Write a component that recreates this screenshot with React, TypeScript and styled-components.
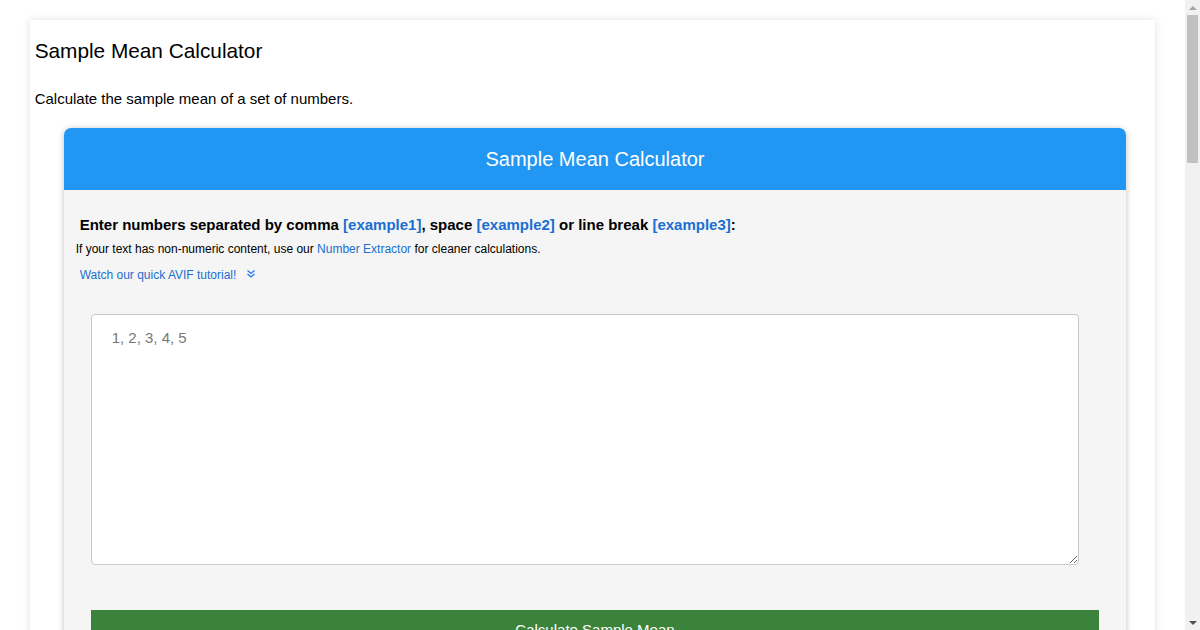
import React from "react";
import styled, { createGlobalStyle } from "styled-components";

const GlobalStyle = createGlobalStyle`
  html, body {
    margin: 0;
    padding: 0;
    background: #ffffff;
    font-family: "Liberation Sans", Arial, sans-serif;
    color: #000;
    overflow: hidden;
  }
`;

const ChevronsDown = () => (
  <svg width="10" height="10" viewBox="0 0 10 10" fill="none" stroke="#1a73e8" strokeWidth="1.2">
    <path d="M1.5 1.5 L5 4.5 L8.5 1.5" />
    <path d="M1.5 5 L5 8 L8.5 5" />
  </svg>
);

const App = () => {
  return (
    <>
      <GlobalStyle />
      <Viewport>
        <Main>
          <Page>
            <PageTitle>Sample Mean Calculator</PageTitle>
            <Intro>Calculate the sample mean of a set of numbers.</Intro>
            <Calculator>
              <CalcHeader>Sample Mean Calculator</CalcHeader>
              <CalcBody>
                <Prompt>
                  Enter numbers separated by comma <Link href="#">[example1]</Link>, space{" "}
                  <Link href="#">[example2]</Link> or line break <Link href="#">[example3]</Link>:
                </Prompt>
                <Note>
                  If your text has non-numeric content, use our <Link href="#">Number Extractor</Link> for
                  cleaner calculations.
                </Note>
                <Tutorial>
                  <Link href="#">Watch our quick AVIF tutorial!</Link>
                  <ChevronsDown />
                </Tutorial>
                <InputWrap>
                  <NumbersInput placeholder="1, 2, 3, 4, 5" />
                </InputWrap>
                <CalcButton>Calculate Sample Mean</CalcButton>
                <Spacer />
              </CalcBody>
            </Calculator>
          </Page>
        </Main>
        <Scrollbar>
          <ScrollArrow $up />
          <Track>
            <Thumb />
          </Track>
          <ScrollArrow />
        </Scrollbar>
      </Viewport>
    </>
  );
};
export default App;

const Viewport = styled.div`
  display: flex;
  height: 100vh;
  overflow: hidden;
`;

const Main = styled.div`
  flex: 1;
  min-width: 0;
  overflow: hidden;
`;

const Scrollbar = styled.div`
  width: 15px;
  flex-shrink: 0;
  background: #f1f1f1;
  display: flex;
  flex-direction: column;
`;

const ScrollArrow = styled.div<{ $up?: boolean }>`
  height: 15px;
  display: flex;
  align-items: center;
  justify-content: center;
  &::before {
    content: "";
    width: 0;
    height: 0;
    border-left: 4px solid transparent;
    border-right: 4px solid transparent;
    ${(p) => (p.$up ? "border-bottom: 4px solid #a3a3a3;" : "border-top: 4px solid #505050;")}
  }
`;

const Track = styled.div`
  flex: 1;
  padding: 0 2px;
`;

const Thumb = styled.div`
  height: 148px;
  background: #c1c1c1;
`;

const Page = styled.div`
  width: 95%;
  margin: 20px auto 40px;
  background: #fff;
  box-shadow: 0 0 8px rgba(0, 0, 0, 0.12);
  padding: 16px 5px 40px;
  box-sizing: border-box;
`;

const PageTitle = styled.h1`
  font-size: 20.8px;
  font-weight: normal;
  margin: 3px 0 0;
  line-height: 24px;
`;

const Intro = styled.p`
  font-size: 15px;
  margin: 27px 0 0;
  line-height: 18px;
`;

const Calculator = styled.div`
  margin: 20px 24px 0 29px;
  border-radius: 7px;
  box-shadow: 0 1px 6px rgba(0, 0, 0, 0.25);
  background: #f5f5f5;
  overflow: hidden;
`;

const CalcHeader = styled.div`
  background: #2196f3;
  color: #fff;
  font-size: 20px;
  height: 62px;
  display: flex;
  align-items: center;
  justify-content: center;
`;

const CalcBody = styled.div`
  padding: 26px 27px 0 12px;
  display: flex;
  flex-direction: column;
`;

const Prompt = styled.div`
  font-size: 15px;
  font-weight: bold;
  padding-left: 4px;
  line-height: 18px;
`;

const Link = styled.a`
  color: #1a6fd1;
  text-decoration: none;
`;

const Note = styled.div`
  font-size: 12px;
  margin-top: 8px;
  line-height: 14px;
`;

const Tutorial = styled.div`
  font-size: 12px;
  margin-top: 12px;
  padding-left: 4px;
  display: flex;
  align-items: center;
  gap: 10px;
  line-height: 14px;
  svg {
    margin-top: -3px;
  }
`;

const InputWrap = styled.div`
  margin: 32px 20px 0 15px;
  display: flex;
`;

const NumbersInput = styled.textarea`
  flex: 1;
  height: 251px;
  box-sizing: border-box;
  border: 1px solid #c8c8c8;
  border-radius: 4px;
  background: #fff;
  padding: 13px 20px;
  font-family: "Liberation Sans", Arial, sans-serif;
  font-size: 15px;
  line-height: 20px;
  &::placeholder {
    color: #777;
  }
`;

const CalcButton = styled.button`
  margin: 45px 0 0 15px;
  height: 44px;
  padding: 0 0 6px;
  border: none;
  background: #3b833a;
  color: #fff;
  font-family: "Liberation Sans", Arial, sans-serif;
  font-size: 15px;
  cursor: pointer;
`;

const Spacer = styled.div`
  height: 30px;
`;
